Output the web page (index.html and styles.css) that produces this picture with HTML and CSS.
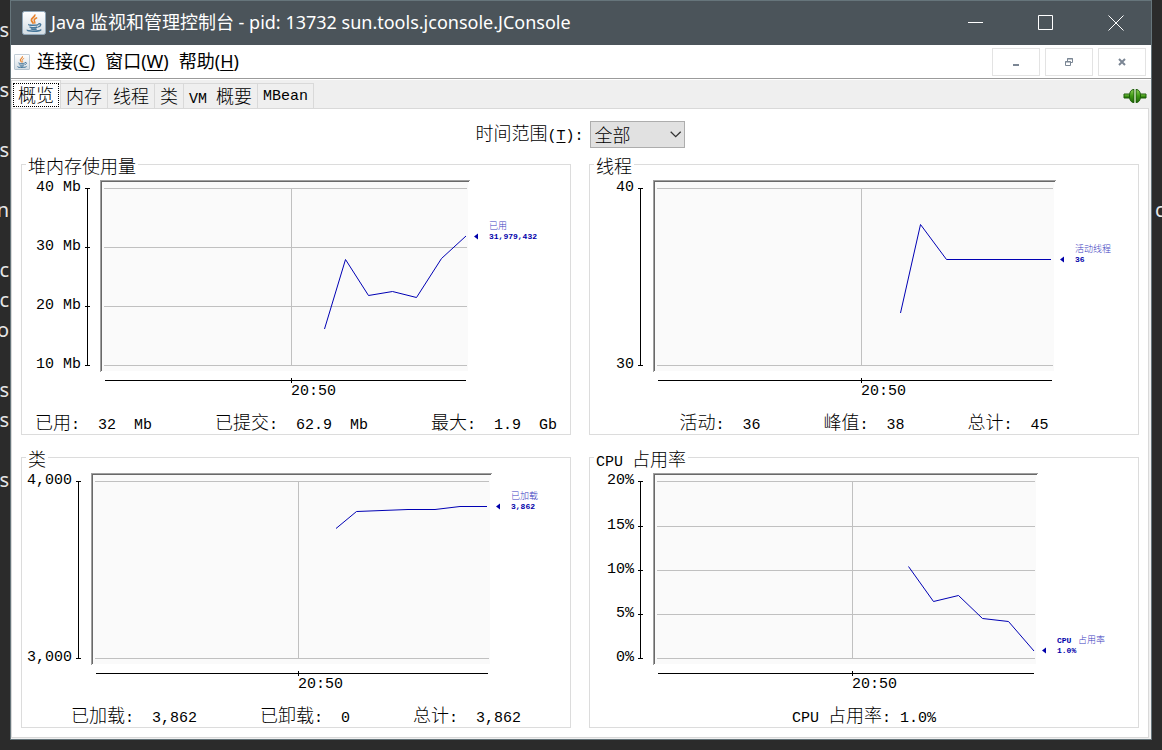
FILE: index.html
```
<!DOCTYPE html>
<html lang="zh-CN">
<head>
<meta charset="utf-8">
<title>Java 监视和管理控制台</title>
<link rel="stylesheet" href="styles.css">
</head>
<body>
<svg class="defs" width="0" height="0" aria-hidden="true">
  <defs>
    <linearGradient id="tile" x1="0" y1="0" x2="0" y2="1">
      <stop offset="0" stop-color="#ffffff"/><stop offset="1" stop-color="#d3dde4"/>
    </linearGradient>
    <linearGradient id="plug" x1="0" y1="0" x2="0" y2="1">
      <stop offset="0" stop-color="#8fd05a"/><stop offset="0.5" stop-color="#3f9a14"/><stop offset="1" stop-color="#226808"/>
    </linearGradient>
    <symbol id="java" viewBox="0 0 24 24">
      <rect x="0.5" y="0.5" width="23" height="23" rx="2" fill="url(#tile)" stroke="#8fa6b8"/>
      <path d="M12.6 3.5c1.2 2.2-3.4 3.4-3.2 5.6.1 1.5 1.600 2.200 2 3.600" fill="none" stroke="#e8822a" stroke-width="1.700"/>
      <path d="M15.200 6.600c-2 .8-3.400 1.800-3 3.100.3 1 1.200 1.500.4 3" fill="none" stroke="#e8822a" stroke-width="1.400"/>
      <path d="M7 13.200c-1.600 1.500 8.600 1.300 9.400.2M8 15.600c-.4 1.400 6.400 1.300 7.500.3M8.800 17.700c.6 1 4.800.9 5.800.1M16.400 12.800c3.200-.8 3 2.400-.2 3.200" fill="none" stroke="#47789b" stroke-width="1.500"/>
      <path d="M5.500 18.700c-1.800 2 13 2.200 13.500-.2" fill="none" stroke="#47789b" stroke-width="1.500"/>
    </symbol>
  </defs>
</svg>
<div class="desktop">
  <pre class="terminal terminal-left">s

s

s

n

c
c
o

s
s

s</pre>
  <main class="window">
    <header class="titlebar">
      <svg class="title-icon" aria-hidden="true"><use href="#java"/></svg>
      <h1 class="title">Java 监视和管理控制台 - pid: 13732 sun.tools.jconsole.JConsole</h1>
      <button class="caption" aria-label="最小化"><svg width="16" height="16"><path d="M0 7.500h15"/></svg></button>
      <button class="caption" aria-label="最大化"><svg width="16" height="16"><path d="M.5.5h14v14h-14z"/></svg></button>
      <button class="caption" aria-label="关闭"><svg width="16" height="16"><path d="M.5.5l15 15M15.500.5l-15 15"/></svg></button>
    </header>
    <nav class="menubar">
      <svg class="menu-icon" aria-hidden="true"><use href="#java"/></svg>
      <button class="menu">连接(<u>C</u>)</button>
      <button class="menu">窗口(<u>W</u>)</button>
      <button class="menu">帮助(<u>H</u>)</button>
      <div class="frame-buttons">
        <button class="frame-button" aria-label="最小化框架"><svg width="8" height="8"><path d="M1 6h6v2h-6z" fill="#7b8694"/></svg></button>
        <button class="frame-button" aria-label="还原框架"><svg width="8" height="8"><path d="M.5 3.500h5v4h-5zM2.500 3v-2.500h5v4H6M0 4h6M2 1h6" fill="none" stroke="#7b8694"/></svg></button>
        <button class="frame-button" aria-label="关闭框架"><svg width="8" height="8"><path d="M1 1l6 6M7 1l-6 6" fill="none" stroke="#7b8694" stroke-width="2"/></svg></button>
      </div>
    </nav>
    <div class="tabstrip">
      <div class="tabs" role="tablist">
        <button class="tab tab-active" role="tab" aria-selected="true"><span class="zh">概览</span></button>
        <button class="tab" role="tab"><span class="zh">内存</span></button>
        <button class="tab" role="tab"><span class="zh">线程</span></button>
        <button class="tab" role="tab"><span class="zh">类</span></button>
        <button class="tab" role="tab">VM <span class="zh">概要</span></button>
        <button class="tab" role="tab">MBean</button>
      </div>
      <svg class="plug" width="24" height="14" aria-hidden="true">
        <path d="M1 5h6v4H1zM17 5h6v4h-6z" fill="url(#plug)" stroke="#1d5c0b"/>
        <path d="M11 .5C8 .5 6.500 3 6.500 7S8 13.500 11 13.500zM13 .5c3 0 4.500 2.500 4.500 6.500s-1.500 6.500-4.500 6.500z" fill="url(#plug)" stroke="#1d5c0b"/>
        <path d="M12 1v12" stroke="#b9dfa0"/>
      </svg>
    </div>
    <section class="page">
      <div class="range">
        <label for="range"><span class="zh">时间范围</span>(<u>T</u>):</label>
        <span class="combo">
          <select id="range"><option>全部</option></select>
          <svg class="combo-arrow" width="12" height="7" aria-hidden="true"><path d="M.7.700l5 5 5-5" fill="none" stroke="#333" stroke-width="1.300"/></svg>
        </span>
      </div>
      <div class="panels">
        <fieldset class="panel">
          <legend><span class="zh">堆内存使用量</span></legend>
          <svg class="chart" viewBox="0 0 548 230">
            <rect class="plot" x="80" y="9" width="366" height="189"/>
            <g class="crisp">
              <path class="bevel" d="M78.500 199V7.500H448"/>
              <path class="bevel-in" d="M79.500 198V8.500H447"/>
              <path class="grid" d="M82 15.500h363M82 74.500h363M82 133.500h363M82 192.500h363M269.500 15v178"/>
              <path class="axis" d="M65.500 15v178M63 15.500h5M63 74.500h5M63 133.500h5M63 192.500h5M83 207.500h361M269.500 205v5"/>
            </g>
            <g class="ylabels"><text x="59" y="18">40 Mb</text><text x="59" y="77">30 Mb</text><text x="59" y="136">20 Mb</text><text x="59" y="195">10 Mb</text></g>
            <text class="xlabel" x="269" y="222">20:50</text>
            <polyline class="series" points="302.500,156 323.500,86.500 346.500,122.500 370.500,118.500 394.500,124.500 419.500,85.500 444,63"/>
            <path class="marker" d="M452 63.500l4-3v6z"/>
            <text class="name" x="467" y="56">已用</text><text class="value" x="467" y="66">31,979,432</text>
          </svg>
          <div class="stats"><span><span class="zh">已用</span>:  32  Mb</span><span><span class="zh">已提交</span>:  62.9  Mb</span><span><span class="zh">最大</span>:  1.9  Gb</span></div>
        </fieldset>
        <fieldset class="panel">
          <legend><span class="zh">线程</span></legend>
          <svg class="chart" viewBox="0 0 548 230">
            <rect class="plot" x="65" y="9" width="399" height="189"/>
            <g class="crisp">
              <path class="bevel" d="M63.500 199V7.500H466"/>
              <path class="bevel-in" d="M64.500 198V8.500H465"/>
              <path class="grid" d="M67 15.500h396M67 192.500h396M271.500 15v178"/>
              <path class="axis" d="M50.500 15v178M48 15.500h5M48 192.500h5M68 207.500h394M271.500 205v5"/>
            </g>
            <g class="ylabels"><text x="44" y="18">40</text><text x="44" y="195">30</text></g>
            <text class="xlabel" x="271" y="222">20:50</text>
            <polyline class="series" points="310.500,140 330.500,51.500 356.500,86.500 461,86.500"/>
            <path class="marker" d="M470 86.500l4-3v6z"/>
            <text class="name" x="485" y="79">活动线程</text><text class="value" x="485" y="89">36</text>
          </svg>
          <div class="stats"><span><span class="zh">活动</span>:  36</span><span><span class="zh">峰值</span>:  38</span><span><span class="zh">总计</span>:  45</span></div>
        </fieldset>
        <fieldset class="panel">
          <legend><span class="zh">类</span></legend>
          <svg class="chart" viewBox="0 0 548 230">
            <rect class="plot" x="71" y="9" width="397" height="189"/>
            <g class="crisp">
              <path class="bevel" d="M69.500 199V7.500H470"/>
              <path class="bevel-in" d="M70.500 198V8.500H469"/>
              <path class="grid" d="M73 15.500h394M73 192.500h394M276.500 15v178"/>
              <path class="axis" d="M56.500 15v178M54 15.500h5M54 192.500h5M74 207.500h392M276.500 205v5"/>
            </g>
            <g class="ylabels"><text x="50" y="18">4,000</text><text x="50" y="195">3,000</text></g>
            <text class="xlabel" x="276" y="222">20:50</text>
            <polyline class="series" points="314,62.500 334.500,45.500 386,43.500 413,43.500 438,40.500 465,40.500"/>
            <path class="marker" d="M474 40.500l4-3v6z"/>
            <text class="name" x="489" y="33">已加载</text><text class="value" x="489" y="43">3,862</text>
          </svg>
          <div class="stats"><span><span class="zh">已加载</span>:  3,862</span><span><span class="zh">已卸载</span>:  0</span><span><span class="zh">总计</span>:  3,862</span></div>
        </fieldset>
        <fieldset class="panel">
          <legend>CPU <span class="zh">占用率</span></legend>
          <svg class="chart" viewBox="0 0 548 230">
            <rect class="plot" x="65" y="9" width="381" height="189"/>
            <g class="crisp">
              <path class="bevel" d="M63.500 199V7.500H448"/>
              <path class="bevel-in" d="M64.500 198V8.500H447"/>
              <path class="grid" d="M67 15.500h378M67 60.500h378M67 104.500h378M67 148.500h378M67 192.500h378M262.500 15v178"/>
              <path class="axis" d="M50.500 15v178M48 15.500h5M48 60.500h5M48 104.500h5M48 148.500h5M48 192.500h5M68 207.500h376M262.500 205v5"/>
            </g>
            <g class="ylabels"><text x="44" y="18">20%</text><text x="44" y="63">15%</text><text x="44" y="107">10%</text><text x="44" y="151">5%</text><text x="44" y="195">0%</text></g>
            <text class="xlabel" x="262" y="222">20:50</text>
            <polyline class="series" points="318.500,100.500 343.500,135.500 368.500,129.500 392.500,152.500 418.500,155.500 444,185"/>
            <path class="marker" d="M452 184.500l4-3v6z"/>
            <text class="value" x="467" y="177">CPU</text><text class="name" x="488" y="177">占用率</text><text class="value" x="467" y="187">1.0%</text>
          </svg>
          <div class="stats"><span>CPU <span class="zh">占用率</span>: 1.0%</span></div>
        </fieldset>
      </div>
    </section>
  </main>
  <pre class="terminal terminal-right">





c</pre>
</div>
</body>
</html>
```
FILE: styles.css
```
* {
  box-sizing: border-box;
}

body {
  margin: 0;
  background: #2b2b2b;
  color: #000;
  font: 15px/18px "Liberation Mono", "Noto Sans CJK SC", monospace;
}

.defs {
  position: absolute;
}

button {
  margin: 0;
  padding: 0;
  border: 0;
  background: none;
  color: inherit;
  font: inherit;
}

.zh {
  font-family: "Noto Sans CJK SC", sans-serif;
  font-size: 18px;
  font-weight: 300;
  line-height: 1;
}

.desktop {
  display: grid;
  grid-template-columns: 10px minmax(0, 1fr) 10px;
  min-height: 100vh;
  padding-bottom: 10px;
}

.terminal {
  display: flex;
  margin: 0;
  padding-top: 15px;
  overflow: hidden;
  color: #e6e6e6;
  font: 20px/30px "Noto Sans", sans-serif;
}

.terminal-left {
  justify-content: flex-end;
  padding-right: 1px;
  text-align: right;
}

.terminal-right {
  padding: 45px 0 0 3px;
}

.window {
  display: flex;
  flex-direction: column;
  border: 1px solid #66757b;
  background: #f0f0f0;
}

/* Title bar */

.titlebar {
  display: flex;
  align-items: center;
  height: 44px;
  padding-left: 11px;
  background: #4b545a;
  color: #fff;
}

.title-icon {
  width: 24px;
  height: 24px;
  margin-right: 5px;
}

.title {
  flex: 1;
  margin: 0;
  padding-bottom: 2px;
  font: 400 18px/24px "Noto Sans", "Noto Sans CJK SC", sans-serif;
  white-space: nowrap;
}

.caption {
  display: flex;
  align-items: center;
  justify-content: center;
  width: 70px;
  height: 44px;
}

.caption path {
  fill: none;
  stroke: #fff;
}

/* Menu bar */

.menubar {
  display: flex;
  align-items: center;
  gap: 10px;
  height: 34px;
  padding: 0 5px 0 3px;
  border-bottom: 1px solid #9b9b9b;
  background: #fff;
  font: 18px/24px "Noto Sans", "Noto Sans CJK SC", sans-serif;
}

.menu {
  padding-bottom: 2px;
}

.menu-icon {
  width: 16px;
  height: 16px;
  margin-right: -3px;
}

u {
  text-underline-offset: 2px;
  text-decoration-thickness: 1px;
}

.frame-buttons {
  display: flex;
  gap: 5px;
  margin-left: auto;
}

.frame-button {
  display: flex;
  align-items: center;
  justify-content: center;
  width: 48px;
  height: 28px;
  border: 1px solid #e3e3e3;
}

/* Tabs */

.tabstrip {
  display: flex;
  align-items: flex-end;
  justify-content: space-between;
  height: 29px;
  padding-right: 4px;
  border-top: 1px solid #fff;
  background: #efefef;
}

.tabs {
  display: flex;
  align-items: flex-end;
  align-self: stretch;
}

.tab {
  height: 25px;
  padding: 2px 5px 0;
  border: solid #d9d9d9;
  border-width: 1px 1px 0 0;
  line-height: 22px;
  white-space: pre;
}

.tab-active {
  height: 28px;
  padding: 2px;
  border-left-width: 1px;
  background: #fff;
}

.tab-active .zh {
  display: block;
  padding: 1px 4px 3px;
  outline: 1px dotted #000;
}

.plug {
  margin-bottom: 5px;
}

/* Page */

.page {
  flex: 1;
  margin: 0 2px 1px 0;
  padding: 12px 9px 9px;
  border: 1px solid #d9d9d9;
  background: #fff;
}

.range {
  display: flex;
  align-items: center;
  justify-content: center;
  gap: 6px;
  height: 27px;
  margin-bottom: 8px;
}

.combo {
  display: grid;
  align-items: center;
  width: 95px;
}

.combo select {
  grid-area: 1 / 1;
  height: 27px;
  padding: 0 4px 2px;
  appearance: none;
  border: 1px solid #adadad;
  border-radius: 0;
  background: #e1e1e1;
  color: #000;
  font: 300 18px/24px "Noto Sans CJK SC", sans-serif;
}

.combo-arrow {
  grid-area: 1 / 1;
  justify-self: end;
  margin-right: 3px;
  pointer-events: none;
}

.panels {
  display: grid;
  grid-template-columns: repeat(2, minmax(0, 1fr));
  gap: 14px 18px;
}

.panel {
  min-width: 0;
  margin: 0;
  padding: 0;
  border: 1px solid #dcdcdc;
}

.panel legend {
  height: 17px;
  margin-left: 4px;
  padding: 0 2px;
  line-height: 16px;
  white-space: pre;
}

.chart {
  display: block;
  width: 100%;
  height: auto;
  font-family: "Liberation Mono", "Noto Sans CJK SC", monospace;
}

.crisp {
  fill: none;
  shape-rendering: crispEdges;
}

.plot {
  fill: #fafafa;
}

.bevel {
  stroke: #a0a0a0;
}

.bevel-in {
  stroke: #696969;
}

.grid {
  stroke: #c0c0c0;
}

.axis {
  stroke: #000;
}

.ylabels {
  text-anchor: end;
}

.ylabels,
.xlabel {
  font-size: 15px;
}

.series {
  fill: none;
  stroke: #0000b4;
}

.marker {
  fill: #0000aa;
}

.name {
  fill: #3c3cc0;
  font: 300 9px "Noto Sans CJK SC", sans-serif;
}

.value {
  fill: #0000aa;
  font-size: 8px;
  font-weight: 700;
}

.stats {
  display: flex;
  justify-content: center;
  gap: 63px;
  height: 31px;
  padding-top: 9px;
  line-height: 22px;
  white-space: pre;
}
```
